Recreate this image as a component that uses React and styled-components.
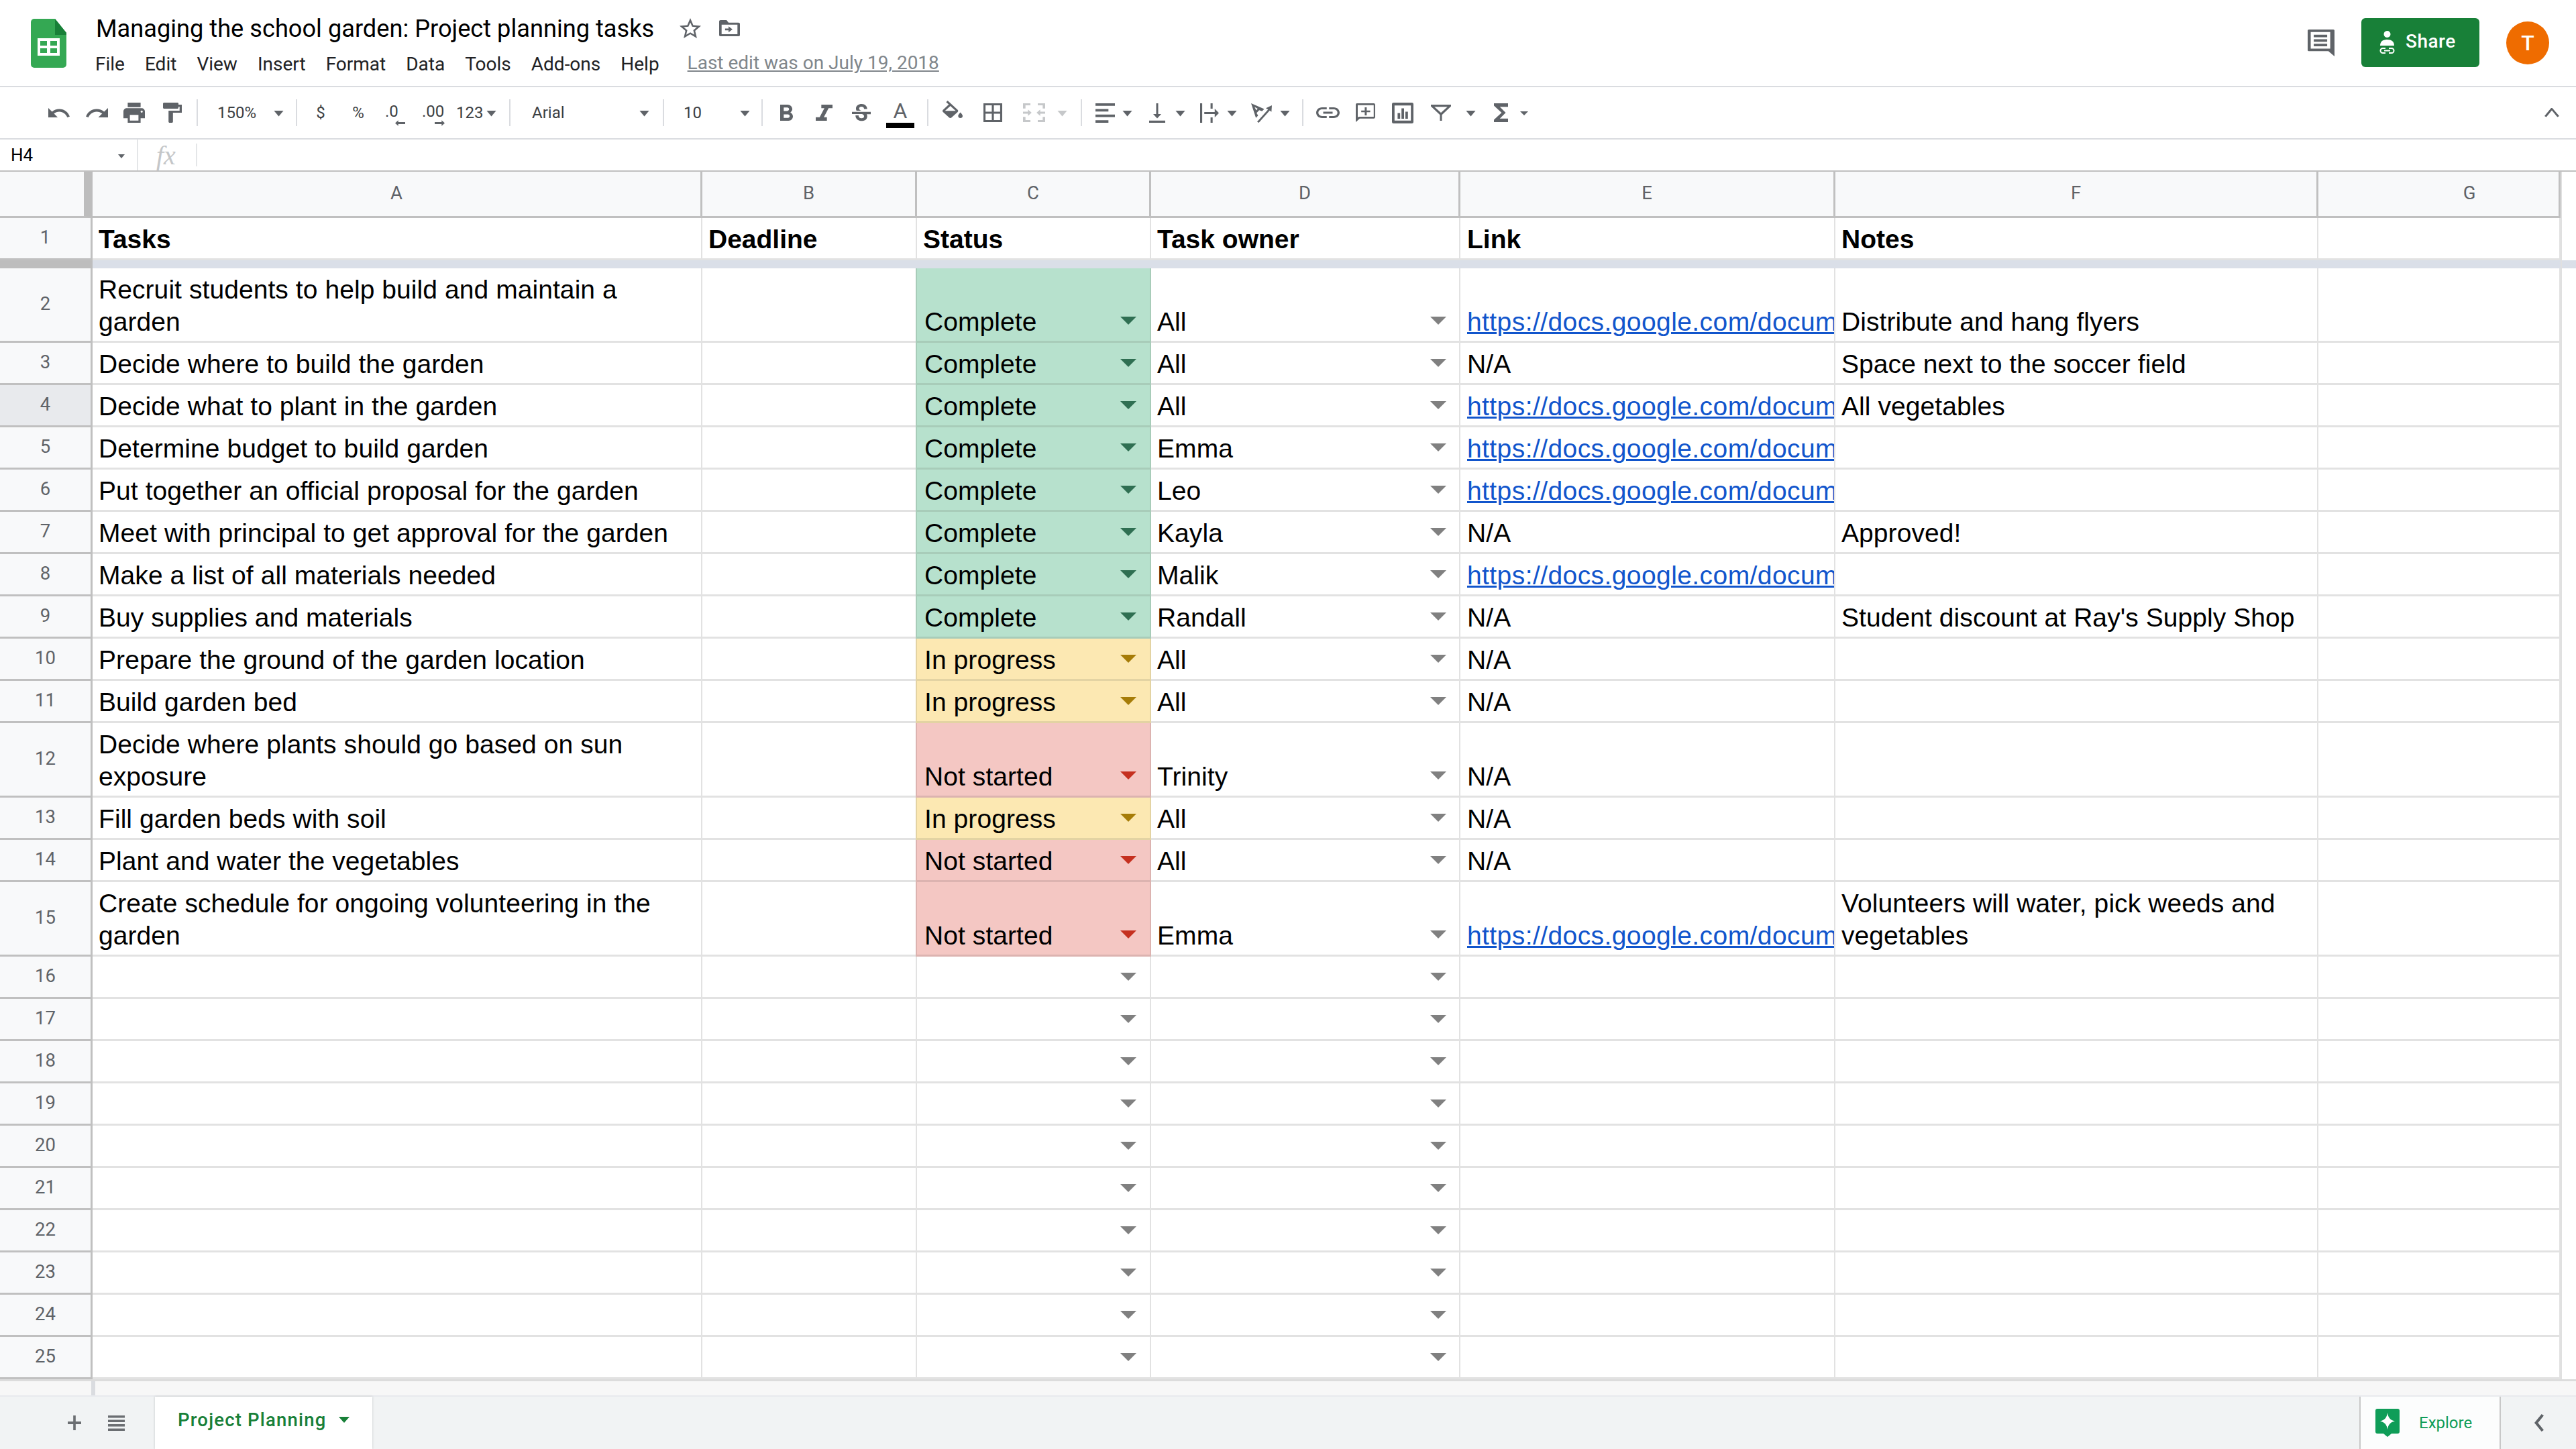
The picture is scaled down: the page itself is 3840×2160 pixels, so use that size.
import React from "react";
import styled, { createGlobalStyle } from "styled-components";

const GlobalStyle = createGlobalStyle`
  html, body { margin: 0; padding: 0; background: #fff; }
  body { font-family: Roboto, "Liberation Sans", sans-serif; }
`;

const COLS = ["A", "B", "C", "D", "E", "F", "G"];
const LINK = "https://docs.google.com/docum";
const STATUS = {
  done: { label: "Complete", bg: "#b7e1cd", line: "#a8ccb9", arrow: "#2f6f52" },
  doing: { label: "In progress", bg: "#fce8b2", line: "#e3d3a3", arrow: "#a67c08" },
  todo: { label: "Not started", bg: "#f4c7c3", line: "#dcb3b0", arrow: "#c5301f" },
};

const ROWS = [
  { task: "Recruit students to help build and maintain a garden", status: "done", owner: "All", link: true, notes: "Distribute and hang flyers", tall: true },
  { task: "Decide where to build the garden", status: "done", owner: "All", na: true, notes: "Space next to the soccer field" },
  { task: "Decide what to plant in the garden", status: "done", owner: "All", link: true, notes: "All vegetables" },
  { task: "Determine budget to build garden", status: "done", owner: "Emma", link: true },
  { task: "Put together an official proposal for the garden", status: "done", owner: "Leo", link: true },
  { task: "Meet with principal to get approval for the garden", status: "done", owner: "Kayla", na: true, notes: "Approved!" },
  { task: "Make a list of all materials needed", status: "done", owner: "Malik", link: true },
  { task: "Buy supplies and materials", status: "done", owner: "Randall", na: true, notes: "Student discount at Ray's Supply Shop" },
  { task: "Prepare the ground of the garden location", status: "doing", owner: "All", na: true },
  { task: "Build garden bed", status: "doing", owner: "All", na: true },
  { task: "Decide where plants should go based on sun exposure", status: "todo", owner: "Trinity", na: true, tall: true },
  { task: "Fill garden beds with soil", status: "doing", owner: "All", na: true },
  { task: "Plant and water the vegetables", status: "todo", owner: "All", na: true },
  { task: "Create schedule for ongoing volunteering in the garden", status: "todo", owner: "Emma", link: true, notes: "Volunteers will water, pick weeds and vegetables", tall: true },
  {}, {}, {}, {}, {}, {}, {}, {}, {}, {},
];

const P = {
  undo: "M12.5 8c-2.65 0-5.05.99-6.9 2.6L2 7v9h9l-3.62-3.62c1.39-1.16 3.16-1.88 5.12-1.88 3.54 0 6.55 2.31 7.6 5.5l2.37-.78C21.08 11.03 17.15 8 12.5 8z",
  redo: "M18.4 10.6C16.55 8.99 14.15 8 11.5 8c-4.65 0-8.58 3.03-9.96 7.22L3.9 16c1.05-3.19 4.05-5.5 7.6-5.5 1.95 0 3.73.72 5.12 1.88L13 16h9V7l-3.6 3.6z",
  print: "M19 8H5c-1.66 0-3 1.34-3 3v6h4v4h12v-4h4v-6c0-1.66-1.34-3-3-3zm-3 11H8v-5h8v5zm3-7c-.55 0-1-.45-1-1s.45-1 1-1 1 .45 1 1-.45 1-1 1zm-1-9H6v4h12V3z",
  paint: "M18 4V3c0-.55-.45-1-1-1H5c-.55 0-1 .45-1 1v4c0 .55.45 1 1 1h12c.55 0 1-.45 1-1V6h1v4H9v11c0 .55.45 1 1 1h2c.55 0 1-.45 1-1v-9h8V4h-3z",
  bold: "M15.6 10.79c.97-.67 1.65-1.77 1.65-2.79 0-2.26-1.75-4-4-4H7v14h7.04c2.09 0 3.71-1.7 3.71-3.79 0-1.52-.86-2.82-2.15-3.42zM10 6.5h3c.83 0 1.5.67 1.5 1.5s-.67 1.5-1.5 1.5h-3v-3zm3.5 9H10v-3h3.5c.83 0 1.5.67 1.5 1.5s-.67 1.5-1.5 1.5z",
  italic: "M10 4v3h2.21l-3.42 8H6v3h8v-3h-2.21l3.42-8H18V4z",
  strike: "M6.85 7.08C6.85 4.37 9.45 3 12.24 3c1.64 0 3 .49 3.9 1.28.77.65 1.46 1.73 1.46 3.24h-3.01c0-.31-.05-.59-.15-.85-.29-.86-1.2-1.28-2.25-1.28-1.86 0-2.34 1.02-2.34 1.7 0 .48.25.88.74 1.21.38.25.77.48 1.41.7H7.39c-.21-.34-.54-.89-.54-1.92zM21 12v-2H3v2h9.62c1.15.45 1.96.75 1.96 1.97 0 1-.81 1.67-2.28 1.67-1.54 0-2.93-.54-2.93-2.51H6.4c0 .55.08 1.13.24 1.58.81 2.29 3.29 3.3 5.67 3.3 2.27 0 5.3-.89 5.3-4.05 0-.3-.01-1.16-.48-1.94H21V12z",
  fill: "M16.56 8.94L7.62 0 6.21 1.41l2.38 2.38-5.15 5.15c-.59.59-.59 1.54 0 2.12l5.5 5.5c.29.29.68.44 1.06.44s.77-.15 1.06-.44l5.5-5.5c.59-.58.59-1.53 0-2.12zM5.21 10L10 5.21 14.79 10H5.21zM19 11.5s-2 2.17-2 3.5c0 1.1.9 2 2 2s2-.9 2-2c0-1.33-2-3.5-2-3.5z",
  borders: "M3 3v18h18V3H3zm8 16H5v-6h6v6zm0-8H5V5h6v6zm8 8h-6v-6h6v6zm0-8h-6V5h6v6z",
  merge: "M3 3h6v2H5v3H3zM15 3h6v5h-2V5h-4zM3 16h2v3h4v2H3zM19 16h2v5h-6v-2h4zM3 11h4V9l3 3-3 3v-2H3zM21 11h-4V9l-3 3 3 3v-2h4z",
  align: "M3 3h18v2.4H3zM3 8.2h12v2.4H3zM3 13.4h18v2.4H3zM3 18.6h12V21H3z",
  valign: "M16 13h-3V3h-2v10H8l4 4 4-4zM4 19v2h16v-2H4z",
  wrap: "M3 3h2v18H3zM13 3h2v5h-2zM13 16h2v5h-2zM7 11h10V8l4 4-4 4v-3H7z",
  rotate: "M3 3l12 5.5-2 2.2-2.6-1-2.4 2.8 1.4 2.5-2 2.2zM6.2 6.6l1.5 3.2 1.3-1.6zM8.5 21l10-12-2-1.2L22 5l-.4 6.4-1.6-1.3L10 22z",
  link: "M3.9 12c0-1.71 1.39-3.1 3.1-3.1h4V7H7c-2.76 0-5 2.24-5 5s2.24 5 5 5h4v-1.9H7c-1.71 0-3.1-1.39-3.1-3.1zM8 13h8v-2H8v2zm9-6h-4v1.9h4c1.71 0 3.1 1.39 3.1 3.1s-1.39 3.1-3.1 3.1h-4V17h4c2.76 0 5-2.24 5-5s-2.24-5-5-5z",
  addComment: "M4 2h16a1.5 1.5 0 0 1 1.5 1.5v14A1.5 1.5 0 0 1 20 19H6l-4 4V3.500A1.500 1.500 0 0 1 4 2zM4 4v14l1-1h15V4zM11 6.500h2V10h3.500v2H13v3.500h-2V12H7.500v-2H11z",
  chart: "M3 1h18a1.500 1.500 0 0 1 1.500 1.500v19A1.500 1.500 0 0 1 21 23H3a1.500 1.500 0 0 1-1.500-1.500v-19A1.500 1.500 0 0 1 3 1zM4 4v16h16V4zM7 12h2.500v6H7zM10.800 7h2.500v11h-2.500zM14.600 10.500h2.500V18h-2.500z",
  filter: "M2 3h20v2l-9 10v7h-2v-7L2 5zM5.500 5.500l6.500 7 6.500-7z",
  sigma: "M18 4H6v2l6.500 6L6 18v2h12v-3h-7l5-5-5-5h7z",
  star: "M22 9.24l-7.19-.62L12 2 9.19 8.63 2 9.24l5.46 4.73L5.820 21 12 17.270 18.180 21l-1.630-7.030L22 9.240zM12 15.400l-3.760 2.270 1-4.280-3.320-2.880 4.380-.380L12 6.100l1.710 4.040 4.380.380-3.320 2.880 1 4.280L12 15.400z",
  folder: "M3 2h6l2 3h10a1.500 1.500 0 0 1 1.500 1.500V20a1.500 1.500 0 0 1-1.500 1.500H3A1.500 1.500 0 0 1 1.500 20V3.500A1.500 1.500 0 0 1 3 2zM4 7.500v11.500h16V7.500zM11 9.500l4 3.700-4 3.700v-2.600H7.500v-2.200H11z",
  comments: "M2 1h20a1 1 0 0 1 1 1v25l-5-5H2a1 1 0 0 1-1-1V2a1 1 0 0 1 1-1zM3.500 3.500v16h16v-16zM6 6h11v2.400H6zM6 10.400h11v2.400H6zM6 14.800h11v2.400H6z",
  add: "M9 0h4v9h9v4h-9v9H9v-9H0V9h9z",
  menu: "M0 0h24v3.500H0zM0 6.500h24V10H0zM0 13h24v3.500H0zM0 19.500h24V23H0z",
  chevronUp: "M11 1l1.500 0 9.500 12-2.500 1.500L12 4.500 4.500 14.500 2 13z",
  chevronLeft: "M8 0l2.500 2L4 12l6.500 10L8 24 0 12z",
};

const TOOLS = [
  { ml: 0, w: 32, h: 14, vb: "2 7 20.500 9", d: P.undo },
  { ml: 24, w: 33, h: 14, vb: "1.500 7 20.500 9", d: P.redo },
  { ml: 23, w: 32, h: 30, vb: "2 3 20 18", d: P.print },
  { ml: 27, w: 28, h: 30, vb: "4 2 17 20", d: P.paint },
  { kind: "div", ml: 22 },
  { kind: "text", ml: 29, w: 58, text: "150%" },
  { kind: "arrow", ml: 26 },
  { kind: "div", ml: 18 },
  { kind: "text", ml: 20, w: 30, text: "$", center: true },
  { kind: "text", ml: 26, w: 30, text: "%", center: true },
  { kind: "decimal", ml: 25, w: 30, text: ".0", flip: true },
  { kind: "decimal", ml: 25, w: 34, text: ".00" },
  { kind: "text", ml: 17, w: 40, text: "123" },
  { kind: "arrow", ml: 5 },
  { kind: "div", ml: 19 },
  { kind: "text", ml: 32, w: 48, text: "Arial" },
  { kind: "arrow", ml: 112 },
  { kind: "div", ml: 20 },
  { kind: "text", ml: 29, w: 26, text: "10" },
  { kind: "arrow", ml: 58 },
  { kind: "div", ml: 17 },
  { ml: 26, w: 19, h: 24, vb: "7 4 10.750 14", d: P.bold },
  { ml: 34, w: 25, h: 24, vb: "6 4 12 14", d: P.italic },
  { ml: 29, w: 28, h: 26, vb: "3 3 18 15.500", d: P.strike },
  { kind: "color", ml: 23 },
  { kind: "div", ml: 19 },
  { ml: 21, w: 30, h: 26, vb: "3 0 18 17", d: P.fill, up: 5 },
  { ml: 31, w: 28, h: 28, vb: "3 3 18 18", d: P.borders },
  { ml: 31, w: 33, h: 28, vb: "3 3 18 18", d: P.merge, color: "#c6c8ca" },
  { kind: "arrow", ml: 18, color: "#c6c8ca" },
  { kind: "div", ml: 20 },
  { ml: 20, w: 29, h: 29, vb: "3 3 18 18", d: P.align },
  { kind: "arrow", ml: 11 },
  { ml: 25, w: 24, h: 29, vb: "4 3 16 18", d: P.valign },
  { kind: "arrow", ml: 15 },
  { ml: 22, w: 28, h: 29, vb: "3 3 18 18", d: P.wrap },
  { kind: "arrow", ml: 12 },
  { ml: 21, w: 31, h: 29, vb: "3 3 19 19", d: P.rotate },
  { kind: "arrow", ml: 12 },
  { kind: "div", ml: 18 },
  { ml: 19, w: 35, h: 16, vb: "2 7 20 10", d: P.link },
  { ml: 24, w: 29, h: 28, vb: "2 2 19.500 21", d: P.addComment },
  { ml: 25, w: 32, h: 31, vb: "1.500 1 21 22", d: P.chart },
  { ml: 26, w: 30, h: 24, vb: "2 3 20 19", d: P.filter },
  { kind: "arrow", ml: 22 },
  { ml: 27, w: 21, h: 28, vb: "6 4 12 16", d: P.sigma },
  { kind: "arrow", ml: 18, small: true },
];

const Icon = ({ vb, d, w, h, color, ml, up, className }) => (
  <IconSvg viewBox={vb} preserveAspectRatio="none" $w={w} $h={h} $ml={ml} $up={up} className={className}>
    <path d={d} fill={color || "#5f6368"} fillRule="evenodd" />
  </IconSvg>
);

const renderTool = (t, i) => {
  if (t.kind === "div") return <ToolDivider key={i} $ml={t.ml} />;
  if (t.kind === "arrow") return <MenuArrow key={i} $ml={t.ml} $color={t.color} $small={t.small} />;
  if (t.kind === "text") return <ToolText key={i} $ml={t.ml} $w={t.w} $center={t.center}>{t.text}</ToolText>;
  if (t.kind === "decimal")
    return (
      <DecimalTool key={i} $ml={t.ml} $w={t.w}>
        {t.text}
        <DecimalArrow viewBox="0 0 16 9">
          <path d={t.flip ? "M5 0v3h11v3H5v3L0 4.500z" : "M11 0v3H0v3h11v3l5-4.500z"} fill="#5f6368" />
        </DecimalArrow>
      </DecimalTool>
    );
  if (t.kind === "color")
    return (
      <ColorTool key={i} $ml={t.ml}>
        A
        <ColorBar />
      </ColorTool>
    );
  return <Icon key={i} {...t} />;
};

function App() {
  let rowNo = 1;
  return (
    <>
      <GlobalStyle />
      <Page>
        <Header>
          <Logo viewBox="0 0 53 73">
            <path d="M5 0h31l17 21v47a5 5 0 0 1-5 5H5a5 5 0 0 1-5-5V5a5 5 0 0 1 5-5z" fill="#34a853" />
            <path d="M36 0l17 21v3H36z" fill="#188038" />
            <path d="M10 29h33v26H10zM14 33v7h10v-7zM29 33v7h10v-7zM14 44v7h10v-7zM29 44v7h10v-7z" fill="#fff" fillRule="evenodd" />
          </Logo>
          <TitleBlock>
            <TitleRow>
              <Title>Managing the school garden: Project planning tasks</Title>
              <Icon vb="2 2 20 19" d={P.star} w={32} h={30} ml={38} />
              <Icon vb="1.500 2 21 19.500" d={P.folder} w={31} h={24} ml={27} />
            </TitleRow>
            <MenuBar>
              {["File", "Edit", "View", "Insert", "Format", "Data", "Tools", "Add-ons", "Help"].map((m) => (
                <MenuItem key={m}>{m}</MenuItem>
              ))}
              <LastEdit>Last edit was on July 19, 2018</LastEdit>
            </MenuBar>
          </TitleBlock>
          <HeaderRight>
            <Icon vb="1 1 22 26" d={P.comments} w={40} h={40} />
            <ShareButton>
              <ShareIcon viewBox="0 0 25 35">
                <circle cx="12.500" cy="5" r="5" fill="#fff" />
                <path d="M2 22c0-6 4-9 10.500-9S23 16 23 22z" fill="#fff" />
                <path d="M10 25H6a4.500 4.500 0 0 0 0 9h4v-2H6a2.500 2.500 0 0 1 0-5h4zM15 25h4a4.500 4.500 0 0 1 0 9h-4v-2h4a2.500 2.500 0 0 0 0-5h-4zM8 28.500h9v2H8z" fill="#fff" />
              </ShareIcon>
              Share
            </ShareButton>
            <Avatar>T</Avatar>
          </HeaderRight>
        </Header>

        <Toolbar>
          {TOOLS.map(renderTool)}
          <Icon vb="2 1 20 14" d={P.chevronUp} w={22} h={14} ml="auto" />
        </Toolbar>

        <FormulaBar>
          <NameBox>
            H4
            <NameArrow />
          </NameBox>
          <FxBox>
            <Fx>fx</Fx>
          </FxBox>
        </FormulaBar>

        <SheetArea>
          <Grid>
            <Corner />
            {COLS.map((c) => (
              <ColHead key={c} $overflowing={c === "G"}>{c}</ColHead>
            ))}

            <RowHead>1</RowHead>
            {["Tasks", "Deadline", "Status", "Task owner", "Link", "Notes", ""].map((h, i) => (
              <Cell key={i} $pad={h === "Link" ? 10 : 9}>
                <HeadText>{h}</HeadText>
              </Cell>
            ))}
            <FreezeHead />
            <FreezeBar />

            {ROWS.map((r, i) => {
              rowNo = i + 2;
              const s = STATUS[r.status];
              return (
                <React.Fragment key={rowNo}>
                  <RowHead $tall={r.tall} $active={rowNo === 4}>{rowNo}</RowHead>
                  <Cell><CellText>{r.task}</CellText></Cell>
                  <Cell />
                  <StatusCell $bg={s && s.bg} $line={s && s.line}>
                    <CellText>{s && s.label}</CellText>
                    <DropArrow $color={s && s.arrow} />
                  </StatusCell>
                  <Cell>
                    <CellText>{r.owner}</CellText>
                    <DropArrow $right={19} />
                  </Cell>
                  <Cell $pad={10}>
                    {r.link ? <LinkText>{LINK}</LinkText> : <CellText>{r.na ? "N/A" : ""}</CellText>}
                  </Cell>
                  <Cell><CellText>{r.notes}</CellText></Cell>
                  <Cell />
                </React.Fragment>
              );
            })}
          </Grid>
          <VScroll>
            <VScrollFreeze />
          </VScroll>
        </SheetArea>

        <HScroll>
          <HThumbMark />
        </HScroll>

        <TabBar>
          <Icon vb="0 0 22 22" d={P.add} w={20} h={22} ml={101} color="#6b6e72" />
          <Icon vb="0 0 24 23" d={P.menu} w={25} h={23} ml={40} color="#6b6e72" />
          <SheetTab>
            Project Planning
            <TabArrow />
          </SheetTab>
          <ExploreButton>
            <ExploreIcon viewBox="0 0 36 42">
              <path d="M3 0h30a3 3 0 0 1 3 3v31a3 3 0 0 1-3 3h-9l-6 5-6-5H3a3 3 0 0 1-3-3V3a3 3 0 0 1 3-3z" fill="#0f9d58" />
              <path d="M18 6c1 7 4 11 11 12.500-7 1.500-10 5.500-11 12.500-1-7-4-11-11-12.500C14 17 17 13 18 6z" fill="#fff" />
            </ExploreIcon>
            <ExploreText>Explore</ExploreText>
          </ExploreButton>
          <Icon vb="0 0 10.500 24" d={P.chevronLeft} w={14} h={26} ml={50} />
        </TabBar>
      </Page>
    </>
  );
}

const Page = styled.div`
  width: 3840px;
  height: 2160px;
  display: flex;
  flex-direction: column;
  overflow: hidden;
  background: #fff;
`;

const IconSvg = styled.svg`
  flex: none;
  display: block;
  width: ${({ $w }) => $w}px;
  height: ${({ $h }) => $h}px;
  margin-left: ${({ $ml }) => (typeof $ml === "number" ? `${$ml}px` : $ml || 0)};
  margin-top: ${({ $up }) => ($up ? `-${$up * 2}px` : 0)};
`;

const Header = styled.div`
  height: 128px;
  flex: none;
  display: flex;
  align-items: flex-start;
  padding: 0 40px 0 46px;
  border-bottom: 2px solid #dadce0;
`;

const Logo = styled.svg`
  width: 53px;
  height: 73px;
  margin-top: 28px;
  flex: none;
`;

const TitleBlock = styled.div`
  margin-left: 44px;
  display: flex;
  flex-direction: column;
  padding-top: 19px;
`;

const TitleRow = styled.div`
  display: flex;
  align-items: center;
  height: 46px;
`;

const Title = styled.div`
  font-size: 36.2px;
  color: #000;
  white-space: nowrap;
`;

const MenuBar = styled.div`
  display: flex;
  align-items: center;
  height: 34px;
  margin-top: 13px;
  margin-left: -1px;
`;

const MenuItem = styled.div`
  font-size: 28px;
  color: #202124;
  margin-right: 30px;
  white-space: nowrap;
`;

const LastEdit = styled.div`
  font-size: 28px;
  color: #80868b;
  text-decoration: underline;
  margin-left: 12px;
  margin-top: -3px;
  white-space: nowrap;
`;

const HeaderRight = styled.div`
  margin-left: auto;
  display: flex;
  align-items: center;
  height: 128px;
`;

const ShareButton = styled.div`
  margin-left: 40px;
  width: 176px;
  height: 73px;
  margin-top: -1px;
  background: #188038;
  border-radius: 6px;
  color: #fff;
  font-size: 28px;
  font-weight: 500;
  letter-spacing: 0.5px;
  display: flex;
  align-items: center;
  padding-left: 26px;
  padding-bottom: 4px;
  box-sizing: border-box;
`;

const ShareIcon = styled.svg`
  width: 25px;
  height: 35px;
  margin: 4px 15px 0 0;
  flex: none;
`;

const Avatar = styled.div`
  margin-left: 40px;
  width: 64px;
  height: 64px;
  border-radius: 50%;
  background: #ef6c00;
  color: #fff;
  font-size: 32px;
  font-weight: 500;
  display: flex;
  align-items: center;
  justify-content: center;
  flex: none;
`;

const Toolbar = styled.div`
  height: 76px;
  flex: none;
  display: flex;
  align-items: center;
  padding: 0 25px 0 72px;
  border-bottom: 2px solid #dadce0;
`;

const ToolDivider = styled.div`
  flex: none;
  width: 2px;
  height: 40px;
  background: #dadce0;
  margin-left: ${({ $ml }) => $ml}px;
`;

const MenuArrow = styled.div`
  flex: none;
  margin-left: ${({ $ml }) => $ml}px;
  width: ${({ $small }) => ($small ? 12 : 15)}px;
  height: ${({ $small }) => ($small ? 6 : 9)}px;
  background: ${({ $color }) => $color || "#5f6368"};
  clip-path: polygon(0 0, 100% 0, 50% 100%);
  margin-top: 2px;
`;

const ToolText = styled.div`
  flex: none;
  width: ${({ $w }) => $w}px;
  margin-left: ${({ $ml }) => $ml}px;
  font-size: 24px;
  color: #3c4043;
  white-space: nowrap;
  text-align: ${({ $center }) => ($center ? "center" : "left")};
`;

const DecimalTool = styled.div`
  flex: none;
  width: ${({ $w }) => $w}px;
  margin-left: ${({ $ml }) => $ml}px;
  font-size: 24px;
  line-height: 24px;
  color: #3c4043;
  display: flex;
  flex-direction: column;
  padding-top: 5px;
  white-space: nowrap;
`;

const DecimalArrow = styled.svg`
  width: 15px;
  height: 9px;
  align-self: flex-end;
  margin-top: 1px;
`;

const ColorTool = styled.div`
  flex: none;
  width: 42px;
  margin-left: ${({ $ml }) => $ml}px;
  display: flex;
  flex-direction: column;
  align-items: center;
  font-size: 32px;
  line-height: 30px;
  color: #5f6368;
  margin-top: 4px;
`;

const ColorBar = styled.div`
  width: 42px;
  height: 8px;
  background: #000;
  margin-top: 3px;
`;

const FormulaBar = styled.div`
  height: 46px;
  flex: none;
  display: flex;
  border-bottom: 2px solid #c0c0c0;
`;

const NameBox = styled.div`
  width: 206px;
  box-sizing: border-box;
  padding: 0 18px 0 16px;
  display: flex;
  align-items: center;
  justify-content: space-between;
  font-size: 26px;
  color: #000;
  border-right: 2px solid #e4e6e8;
`;

const NameArrow = styled.div`
  width: 0;
  height: 0;
  border-left: 5px solid transparent;
  border-right: 5px solid transparent;
  border-top: 6px solid #5f6368;
  margin-top: 4px;
`;

const FxBox = styled.div`
  width: 88px;
  height: 34px;
  align-self: center;
  box-sizing: border-box;
  border-right: 2px solid #e4e6e8;
  display: flex;
  align-items: center;
  padding-left: 27px;
`;

const Fx = styled.div`
  font-family: "Liberation Serif", serif;
  font-style: italic;
  font-size: 40px;
  color: #c4c6c8;
`;

const SheetArea = styled.div`
  flex: none;
  display: flex;
  width: 3840px;
`;

const Grid = styled.div`
  display: grid;
  grid-template-columns: 138px 909px 320px 349px 461px 559px 720px 361px;
  width: 3817px;
`;

const Corner = styled.div`
  height: 69px;
  box-sizing: border-box;
  background: #f8f9fa;
  border-right: 13px solid #bdbdbd;
  border-bottom: 3px solid #c0c0c0;
`;

const ColHead = styled.div`
  height: 69px;
  box-sizing: border-box;
  background: #f8f9fa;
  border-right: 3px solid #c0c0c0;
  border-bottom: 3px solid #c0c0c0;
  display: flex;
  align-items: center;
  justify-content: center;
  padding-bottom: 4px;
  padding-left: ${({ $overflowing }) => ($overflowing ? 92 : 0)}px;
  font-size: 27.5px;
  color: #5f6368;
`;

const RowHead = styled.div`
  height: ${({ $tall }) => ($tall ? 111 : 63)}px;
  box-sizing: border-box;
  background: ${({ $active }) => ($active ? "#e8eaed" : "#f8f9fa")};
  border-right: 3px solid #c0c0c0;
  border-bottom: 3px solid #c0c0c0;
  display: flex;
  align-items: center;
  justify-content: center;
  padding-bottom: 4px;
  font-size: 27.5px;
  color: #5f6368;
`;

const FreezeHead = styled.div`
  height: 12px;
  background: #bdbdbd;
`;

const FreezeBar = styled.div`
  grid-column: 2 / -1;
  background: #dadfe8;
`;

const Cell = styled.div`
  box-sizing: border-box;
  min-width: 0;
  border-right: 2px solid #e2e2e2;
  border-bottom: 3px solid #e2e2e2;
  display: flex;
  align-items: flex-end;
  justify-content: space-between;
  padding-left: ${({ $pad }) => $pad || 9}px;
  overflow: hidden;
`;

const StatusCell = styled(Cell)`
  margin-left: -2px;
  padding-left: 11px;
  background: ${({ $bg }) => $bg || "transparent"};
  border-left: 2px solid ${({ $line }) => $line || "#e2e2e2"};
  border-right-color: ${({ $line }) => $line || "#e2e2e2"};
  border-bottom-color: ${({ $line }) => $line || "#e2e2e2"};
`;

const CellText = styled.div`
  font-family: "Liberation Sans", Arial, sans-serif;
  font-size: 39px;
  line-height: 48px;
  letter-spacing: 0.07px;
  color: #000;
  padding-bottom: 4px;
  min-width: 0;
`;

const HeadText = styled(CellText)`
  font-weight: 700;
  padding-bottom: 4px;
  letter-spacing: 0;
`;

const LinkText = styled(CellText)`
  color: #1155cc;
  text-decoration: underline;
  text-decoration-thickness: 3px;
  letter-spacing: 0.42px;
  white-space: nowrap;
`;

const DropArrow = styled.div`
  flex: none;
  width: 0;
  height: 0;
  margin: 0 ${({ $right }) => $right || 20}px 24px 0;
  border-left: 12px solid transparent;
  border-right: 12px solid transparent;
  border-top: 12px solid ${({ $color }) => $color || "#808080"};
`;

const VScroll = styled.div`
  flex: 1;
  background: #fff;
  border-left: 2px solid #e0e0e0;
  padding-top: 132px;
`;

const VScrollFreeze = styled.div`
  height: 12px;
  background: #dadfe8;
`;

const HScroll = styled.div`
  height: 24px;
  flex: none;
  background: #f7f7f7;
  border-top: 3px solid #dcdcdc;
  box-sizing: border-box;
`;

const HThumbMark = styled.div`
  width: 6px;
  height: 100%;
  margin-left: 136px;
  background: #dadce0;
`;

const TabBar = styled.div`
  height: 80px;
  flex: none;
  display: flex;
  align-items: center;
  background: #f1f3f4;
  border-top: 2px solid #e8eaed;
  box-sizing: border-box;
  padding-right: 48px;
`;

const SheetTab = styled.div`
  margin-left: 45px;
  align-self: stretch;
  width: 324px;
  box-sizing: border-box;
  background: #fff;
  box-shadow: 0 0 3px rgba(60, 64, 67, 0.25);
  display: flex;
  align-items: center;
  padding: 0 0 9px 34px;
  color: #188038;
  font-size: 27.5px;
  font-weight: 500;
  letter-spacing: 1.2px;
  white-space: nowrap;
`;

const TabArrow = styled.div`
  width: 0;
  height: 0;
  margin-left: 18px;
  border-left: 8px solid transparent;
  border-right: 8px solid transparent;
  border-top: 9px solid #188038;
`;

const ExploreButton = styled.div`
  margin-left: auto;
  align-self: stretch;
  width: 211px;
  box-sizing: border-box;
  background: #fcfdfd;
  border-left: 2px solid #c8c8c8;
  border-right: 2px solid #c8c8c8;
  display: flex;
  align-items: center;
  padding-left: 22px;
`;

const ExploreIcon = styled.svg`
  width: 36px;
  height: 42px;
  flex: none;
`;

const ExploreText = styled.div`
  margin-left: 29px;
  font-size: 24px;
  color: #0f9d58;
`;

export default App;
